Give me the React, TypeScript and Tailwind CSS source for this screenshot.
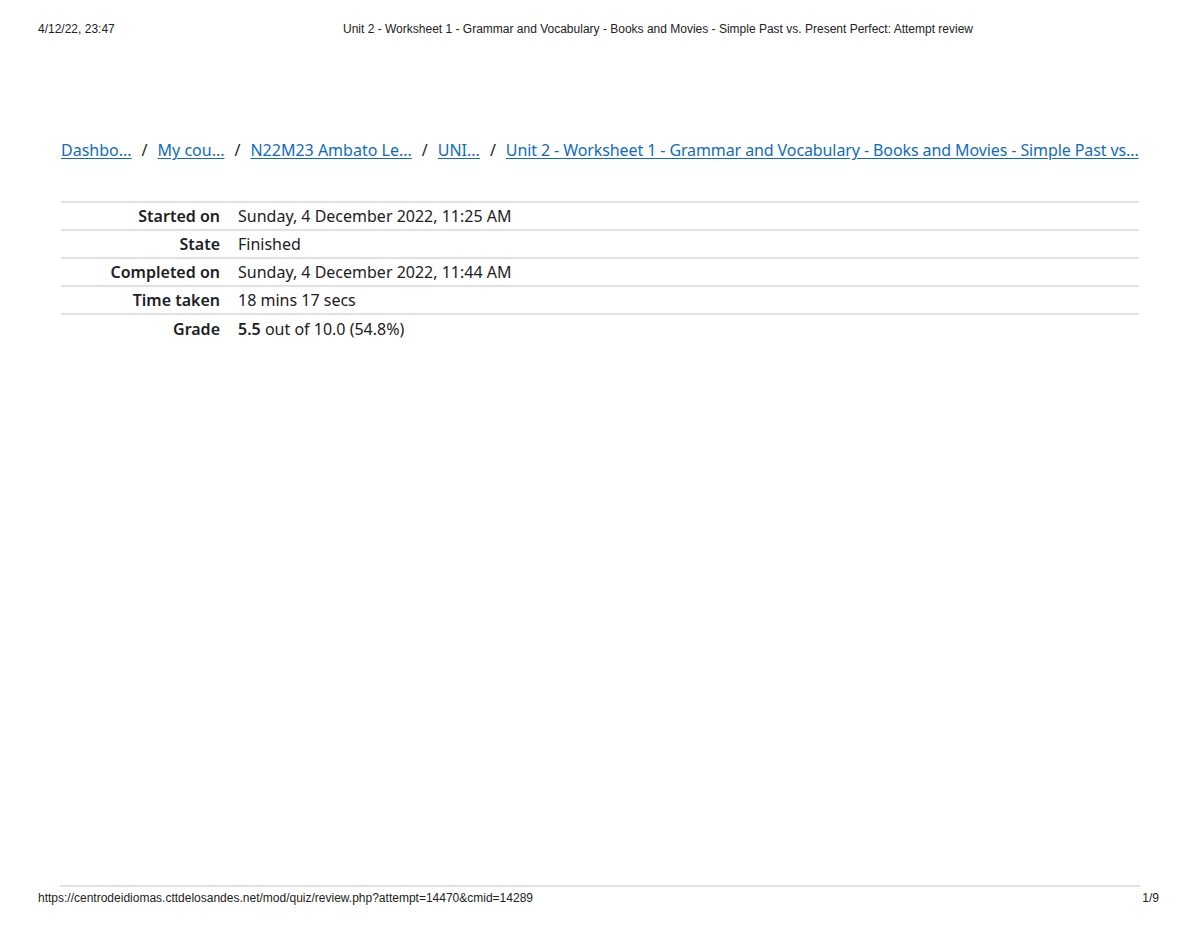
import React from "react"

const rows = [
  { label: "Started on", value: "Sunday, 4 December 2022, 11:25 AM" },
  { label: "State", value: "Finished" },
  { label: "Completed on", value: "Sunday, 4 December 2022, 11:44 AM" },
  { label: "Time taken", value: "18 mins 17 secs" },
  { label: "Grade", value: "5.5 out of 10.0 (54.8%)", bold: "5.5" },
]

const crumbs = ["Dashbo...", "My cou...", "N22M23 Ambato Le...", "UNI..."]

export default function App() {
  return (
    <div className="w-[1200px] h-[927px] bg-white flex flex-col text-[#1d2125]">
      {/* Cabecera de impresión */}
      <div className="flex items-center h-[37px] pt-[21px] pl-[38px] text-[12px] text-[#222] font-['Liberation_Sans',Arial,sans-serif]">
        <div className="w-[305px]">4/12/22, 23:47</div>
        <div>Unit 2 - Worksheet 1 - Grammar and Vocabulary - Books and Movies - Simple Past vs. Present Perfect: Attempt review</div>
      </div>

      <div className="px-[61px] pt-[101px] flex-1 font-['Noto_Sans',sans-serif]">
        {/* Breadcrumb */}
        <nav className="flex items-center text-[16px] leading-[24px] whitespace-nowrap">
          {crumbs.map((c) => (
            <React.Fragment key={c}>
              <a className="text-[#0f6cbf] underline underline-offset-2">{c}</a>
              <span className="mx-[10px] text-[#1d2125]">/</span>
            </React.Fragment>
          ))}
          <a className="text-[#0f6cbf] underline underline-offset-2 tracking-[-0.1px]">
            Unit 2 - Worksheet 1 - Grammar and Vocabulary - Books and Movies - Simple Past vs...
          </a>
        </nav>

        {/* Resumen del intento */}
        <table className="w-full mt-[39px] text-[16px] border-collapse">
          <tbody>
            {rows.map((r) => (
              <tr key={r.label} className="border-t-2 border-[#dee2e6]">
                <th className="w-[177px] text-right font-semibold pr-[18px] h-[28px] py-0 whitespace-nowrap">{r.label}</th>
                <td className="h-[28px] py-0">
                  {r.bold ? (
                    <>
                      <span className="font-semibold">{r.bold}</span>
                      {r.value.slice(r.bold.length)}
                    </>
                  ) : (
                    r.value
                  )}
                </td>
              </tr>
            ))}
          </tbody>
        </table>
      </div>

      {/* Pie de impresión */}
      <div className="h-[42px] font-['Liberation_Sans',Arial,sans-serif] text-[12px] text-[#222]">
        <div className="mx-[60px] border-t-2 border-[#dee2e6]"></div>
        <div className="flex justify-between pl-[38px] pr-[41px] pt-[2px]">
          <span>https://centrodeidiomas.cttdelosandes.net/mod/quiz/review.php?attempt=14470&amp;cmid=14289</span>
          <span>1/9</span>
        </div>
      </div>
    </div>
  )
}
